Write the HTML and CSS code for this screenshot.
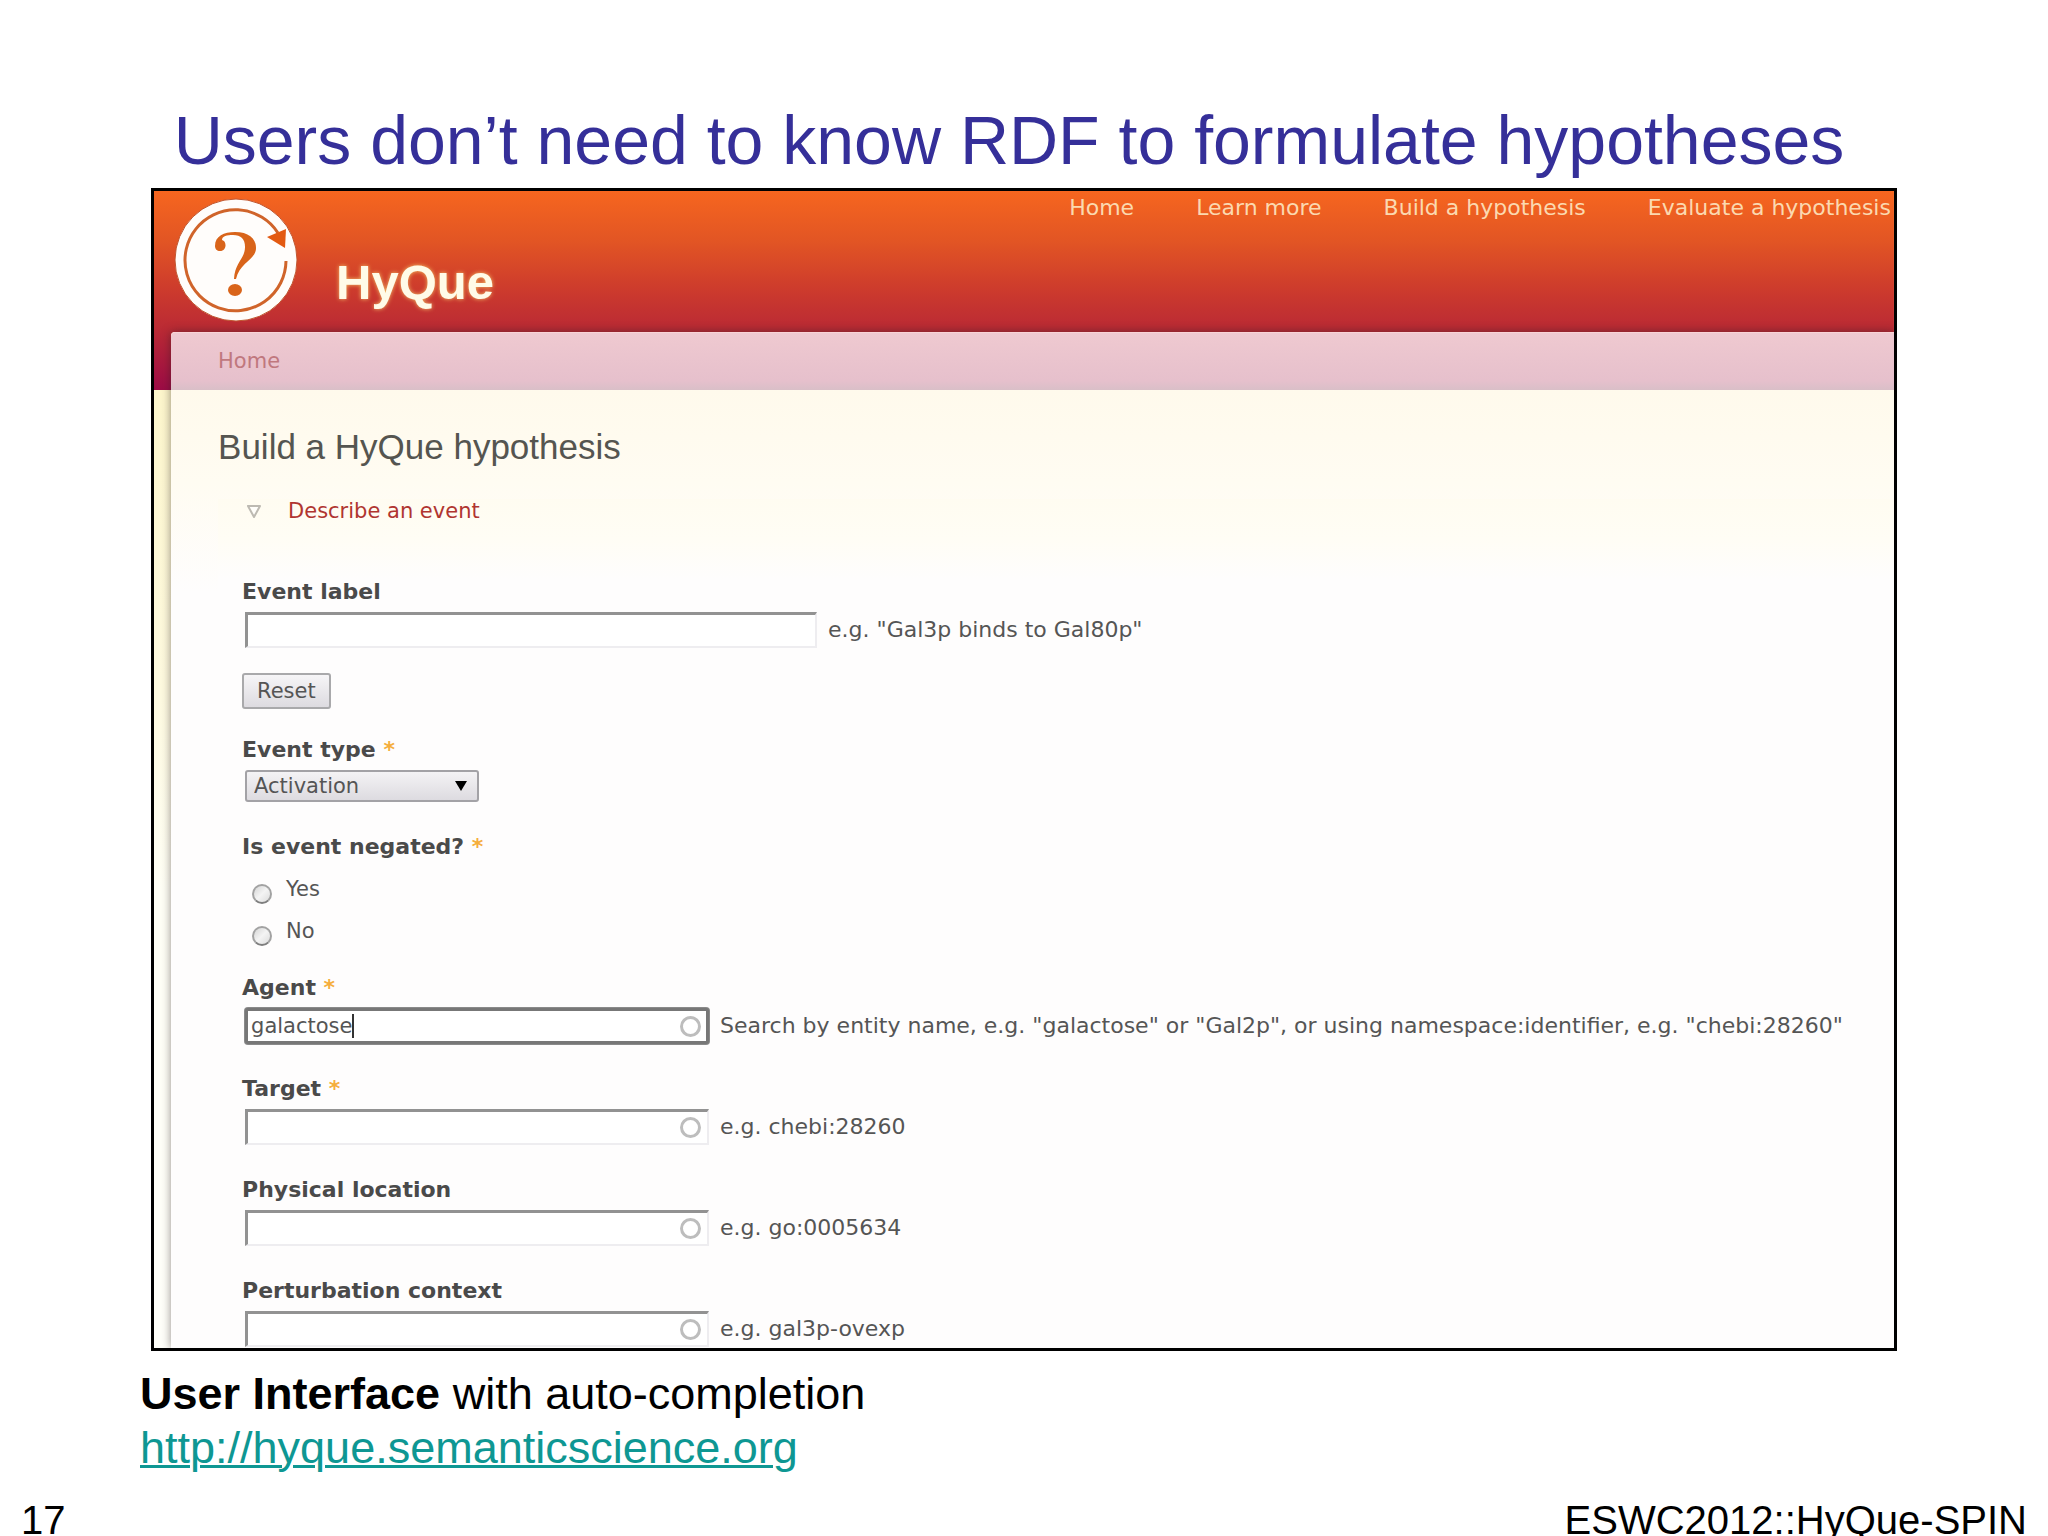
FILE: index.html
```html
<!DOCTYPE html>
<html lang="en">
<head>
    <meta charset="UTF-8">
    <meta name="viewport" content="width=device-width, initial-scale=1.0">
    <title>HyQue - Build a hypothesis</title>
    <link rel="stylesheet" href="styles.css">
</head>
<body>
    <h1 class="slide-title">Users don’t need to know RDF to formulate hypotheses</h1>

    <div class="frame">
        <header class="site-header">
            <svg class="logo" viewBox="0 0 124 124" aria-hidden="true">
                <circle cx="62" cy="62" r="61" fill="#fffdfb" stroke="#c0562f" stroke-width="1"/>
                <!-- circular arrow -->
                <path d="M112 63 A50.500 50.500 0 1 1 104 35" fill="none" stroke="#d0642a" stroke-width="3"/>
                <path d="M93 39 L112 31 L111 50 Z" fill="#e35a12"/>
                <!-- question mark -->
                <path d="M41 48 C41 38 50 34 61 34 C74 34 82 40 82 50 C82 62 66 64 62 81 L60 81 C61 64 71 61 71 49 C71 41 67 37 59 37 C53 37 48 38 48 42 C53 43 53 53 46 53 C43 53 41 51 41 48 Z" fill="#d9641a"/>
                <ellipse cx="61" cy="92" rx="7" ry="6" fill="#d9641a"/>
            </svg>
            <div class="site-name">HyQue</div>
            <nav class="main-nav">
                <a href="#">Home</a>
                <a href="#">Learn more</a>
                <a href="#">Build a hypothesis</a>
                <a href="#">Evaluate a hypothesis</a>
            </nav>
        </header>

        <main class="panel">
            <div class="breadcrumb"><a href="#">Home</a></div>

            <div class="content">
                <h2 class="page-title">Build a HyQue hypothesis</h2>

                <form class="event-form">
                    <div class="legend">
                        <svg class="toggle" viewBox="0 0 16 15" aria-hidden="true">
                            <path d="M2 2 H14 L8 13 Z" fill="#fffefa" stroke="#bdbab2" stroke-width="2" stroke-linejoin="round"/>
                        </svg>
                        <a href="#">Describe an event</a>
                    </div>

                    <div class="field">
                        <label for="event-label">Event label</label>
                        <div class="row">
                            <input class="text-box wide" type="text" id="event-label">
                            <span class="hint">e.g. "Gal3p binds to Gal80p"</span>
                        </div>
                    </div>

                    <button class="reset-btn" type="reset">Reset</button>

                    <div class="field">
                        <label for="event-type">Event type <span class="required">*</span></label>
                        <div class="row">
                            <div class="select-wrap">
                                <select id="event-type">
                                    <option>Activation</option>
                                </select>
                                <span class="select-arrow"></span>
                            </div>
                        </div>
                    </div>

                    <div class="field radios" role="radiogroup" aria-labelledby="negated">
                        <div class="label" id="negated">Is event negated? <span class="required">*</span></div>
                        <div class="radio-row">
                            <input type="radio" name="negated" id="negated-yes">
                            <label for="negated-yes">Yes</label>
                        </div>
                        <div class="radio-row">
                            <input type="radio" name="negated" id="negated-no">
                            <label for="negated-no">No</label>
                        </div>
                    </div>

                    <div class="field">
                        <label for="agent">Agent <span class="required">*</span></label>
                        <div class="row">
                            <div class="lookup">
                                <input class="text-box active" type="text" id="agent" value="galactose">
                                <span class="caret"></span>
                                <span class="ring"></span>
                            </div>
                            <span class="hint">Search by entity name, e.g. "galactose" or "Gal2p", or using namespace:identifier, e.g. "chebi:28260"</span>
                        </div>
                    </div>

                    <div class="field">
                        <label for="target">Target <span class="required">*</span></label>
                        <div class="row">
                            <div class="lookup">
                                <input class="text-box" type="text" id="target">
                                <span class="ring"></span>
                            </div>
                            <span class="hint">e.g. chebi:28260</span>
                        </div>
                    </div>

                    <div class="field">
                        <label for="location">Physical location</label>
                        <div class="row">
                            <div class="lookup">
                                <input class="text-box" type="text" id="location">
                                <span class="ring"></span>
                            </div>
                            <span class="hint">e.g. go:0005634</span>
                        </div>
                    </div>

                    <div class="field">
                        <label for="context">Perturbation context</label>
                        <div class="row">
                            <div class="lookup">
                                <input class="text-box" type="text" id="context">
                                <span class="ring"></span>
                            </div>
                            <span class="hint">e.g. gal3p-ovexp</span>
                        </div>
                    </div>
                </form>
            </div>
        </main>
    </div>

    <div class="caption">
        <div><strong>User Interface</strong> with auto-completion</div>
        <a href="http://hyque.semanticscience.org">http://hyque.semanticscience.org</a>
    </div>

    <footer class="slide-footer">
        <span>17</span>
        <span>ESWC2012::HyQue-SPIN</span>
    </footer>
</body>
</html>
```
FILE: styles.css
```css
* {
    box-sizing: border-box;
}

body {
    margin: 0;
    height: 100vh;
    overflow: hidden;
    background-color: #ffffff;
    color: #000000;
    font-family: "Liberation Sans", Arial, sans-serif;
}

.slide-title {
    margin: 0;
    padding: 100px 30px 8px 0;
    font-size: 68px;
    font-weight: normal;
    line-height: 80px;
    text-align: center;
    color: #352f99;
}

/* Framed application */
.frame {
    width: 85.25%;
    margin: 0 auto;
    border: 3px solid #000000;
    overflow: hidden;
    background: linear-gradient(to bottom, #f6661f 0, #e25524 50px, #cc3a2d 100px, #b92935 141px, #9c0c46 199px) no-repeat top / 100% 199px,
        linear-gradient(to bottom, #fdf6cc 199px, #fefae0 500px, #fffff6 700px, #fffffa);
    font-family: "DejaVu Sans", Verdana, sans-serif;
    font-size: 21px;
    line-height: 24px;
    color: #555555;
}

.frame a {
    text-decoration: none;
}

.site-header {
    display: flex;
    height: 141px;
    padding: 7px 3px 0 20px;
}

.logo {
    width: 124px;
    height: 124px;
}

.site-name {
    align-self: flex-end;
    margin-left: 38px;
    padding-bottom: 22px;
    font-family: "Liberation Sans", Arial, sans-serif;
    font-size: 49px;
    font-weight: bold;
    line-height: 56px;
    color: #fffbe8;
    text-shadow: 0 0 4px #f3c46a;
}

.main-nav {
    display: flex;
    gap: 62px;
    margin-left: auto;
    font-size: 22px;
    line-height: 20px;
}

.main-nav a {
    color: #fbd9b0;
}

.panel {
    margin-left: 17px;
    border-top-left-radius: 4px;
    background: linear-gradient(to bottom, #fffaec 58px, #fffcf2 150px, #fefdfd 260px);
    box-shadow: 0 0 10px rgba(40, 30, 30, 0.5);
}

.breadcrumb {
    height: 58px;
    padding: 16px 47px;
    border-top: 1px solid #f9d3d6;
    border-top-left-radius: 4px;
    background: linear-gradient(to bottom, #efc9d0, #e6c0cc 48px, #d9bfc8);
}

.breadcrumb a {
    color: #c0787e;
}

.content {
    padding: 37px 0 1px 47px;
}

.page-title {
    margin: 0;
    font-family: "Liberation Sans", Arial, sans-serif;
    font-size: 35px;
    font-weight: normal;
    line-height: 40px;
    color: #555550;
}

/* Form */
.event-form {
    margin-top: 32px;
    padding-left: 24px;
    background: linear-gradient(to bottom, #fffcf1, #fffdf5 40px, #fefdfd 80px);
}

.legend {
    display: flex;
    align-items: center;
    gap: 26px;
    margin-bottom: 57px;
    padding-left: 4px;
}

.legend a {
    color: #b03530;
}

.toggle {
    width: 16px;
    height: 15px;
}

.field {
    display: flex;
    flex-direction: column;
    gap: 8px;
    margin-bottom: 33px;
}

.field:last-child {
    margin-bottom: 0;
}

.field > label,
.field > .label {
    font-size: 22px;
    font-weight: bold;
    color: #4a4a4a;
}

.required {
    color: #f5ae3c;
}

.row {
    display: flex;
    align-items: center;
    gap: 11px;
    padding-left: 3px;
}

.hint {
    font-size: 22px;
}

.text-box {
    display: block;
    width: 464px;
    height: 36px;
    padding: 0 3px;
    border: 3px solid #929292;
    border-right: 2px solid #eeedf0;
    border-bottom: 2px solid #eeedf0;
    outline: none;
    background-color: #ffffff;
    font: inherit;
    color: #555555;
}

.text-box.wide {
    width: 572px;
}

.text-box.active {
    border: 3px solid #777777;
    border-radius: 3px;
    box-shadow: 0 0 0 1px #8a8a8a;
}

.lookup {
    position: relative;
}

.ring {
    position: absolute;
    top: 8px;
    right: 8px;
    width: 21px;
    height: 21px;
    border: 3px solid #bdbdbd;
    border-radius: 50%;
}

.caret {
    position: absolute;
    top: 6px;
    left: 107px;
    width: 2px;
    height: 24px;
    background-color: #333333;
}

.reset-btn {
    display: block;
    height: 36px;
    margin: -8px 0 29px;
    padding: 0 13px;
    border: 2px solid #a9a9ab;
    border-radius: 3px;
    background: linear-gradient(to bottom, #f6f5f7, #dddbe0);
    font: inherit;
    color: #555555;
}

.select-wrap {
    position: relative;
}

.select-wrap select {
    display: block;
    width: 234px;
    height: 32px;
    padding: 0 7px;
    border: 2px solid #a3a2a6;
    border-radius: 3px;
    appearance: none;
    background: linear-gradient(to bottom, #f4f3f5, #dddbe0);
    font: inherit;
    color: #555555;
}

.select-arrow {
    position: absolute;
    top: 11px;
    right: 12px;
    border: 6px solid transparent;
    border-top: 10px solid #000000;
    border-bottom: none;
}

.radios {
    gap: 18px;
}

.radio-row {
    display: flex;
    align-items: flex-end;
    gap: 14px;
    height: 24px;
    padding-left: 10px;
}

.radio-row input {
    width: 20px;
    height: 20px;
    margin: 0 0 -3px;
    border: 2px solid #a2a2a2;
    border-bottom-color: #7e7e7e;
    border-radius: 50%;
    appearance: none;
    background: linear-gradient(135deg, #d4d4d4, #f4f4f4 50%, #dcdcdc);
}

/* Below the frame */
.caption {
    padding: 16px 140px 0;
    font-size: 45px;
    line-height: 54px;
}

.caption a {
    color: #0e9793;
    text-decoration-thickness: 3px;
}

.slide-footer {
    display: flex;
    justify-content: space-between;
    padding: 22px 21px 0 21px;
    font-size: 40px;
    line-height: 46px;
}
```
